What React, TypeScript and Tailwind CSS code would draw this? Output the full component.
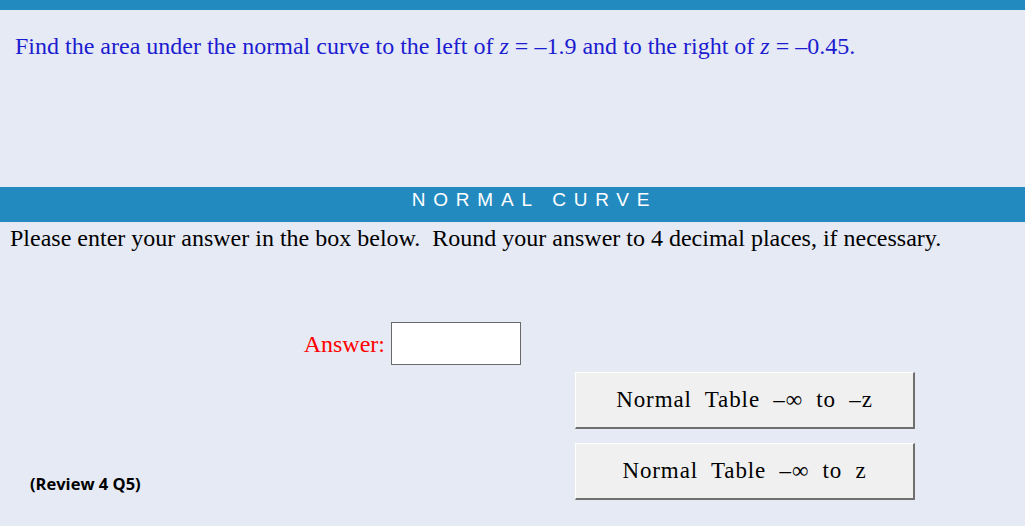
import React from 'react';

const serif = { fontFamily: '"Liberation Serif", "Times New Roman", serif' };

const TableButton: React.FC<{ label: string }> = ({ label }) => (
  <button
    className="h-[57px] w-[340px] whitespace-pre border-t border-l border-t-white border-l-white border-b-2 border-r-2 border-b-[#6f6f6f] border-r-[#6f6f6f] bg-[#f0f0f0] text-[23px] tracking-[0.9px] text-black"
    style={serif}
  >
    {label}
  </button>
);

export default function App() {
  return (
    <div className="h-[526px] w-[1025px] overflow-hidden bg-[#e6eaf5]">
      <div className="h-[10px] bg-[#238abf]" />

      <div className="h-[177px] pl-[15px] pt-[22px]">
        <p className="text-[24px] leading-[28px] text-[#1c1cd0]" style={serif}>
          Find the area under the normal curve to the left of <i>z</i> = –1.9 and to the right of{' '}
          <i>z</i> = –0.45.
        </p>
      </div>

      <div
        className="flex h-[35px] items-center justify-center bg-[#238abf] pb-[8px] pl-[44px] text-[19px] tracking-[7.8px] text-white"
        style={{ fontFamily: '"Liberation Sans", Arial, sans-serif' }}
      >
        NORMAL CURVE
      </div>

      <p className="mt-[3px] pl-[10px] text-[24px] leading-[26px] text-black whitespace-pre" style={serif}>
        Please enter your answer in the box below.  Round your answer to 4 decimal places, if necessary.
      </p>

      <div className="mt-[71px] flex items-center">
        <span className="w-[391px] pr-[6px] text-right text-[24px] text-[#ff0000]" style={serif}>
          Answer:
        </span>
        <input
          type="text"
          className="h-[43px] w-[130px] border border-[#6a6a6a] bg-white outline-none"
        />
      </div>

      <div className="mt-[7px] flex">
        <div className="flex w-[575px] items-end pb-[6px] pl-[30px]">
          <span
            className="text-[16.5px] font-bold leading-[20px] text-black"
            style={{ fontFamily: '"Open Sans", Calibri, sans-serif' }}
          >
            (Review 4 Q5)
          </span>
        </div>
        <div className="flex flex-col gap-[14px]">
          <TableButton label="Normal  Table  –∞  to  –z" />
          <TableButton label="Normal  Table  –∞  to  z" />
        </div>
      </div>
    </div>
  );
}
